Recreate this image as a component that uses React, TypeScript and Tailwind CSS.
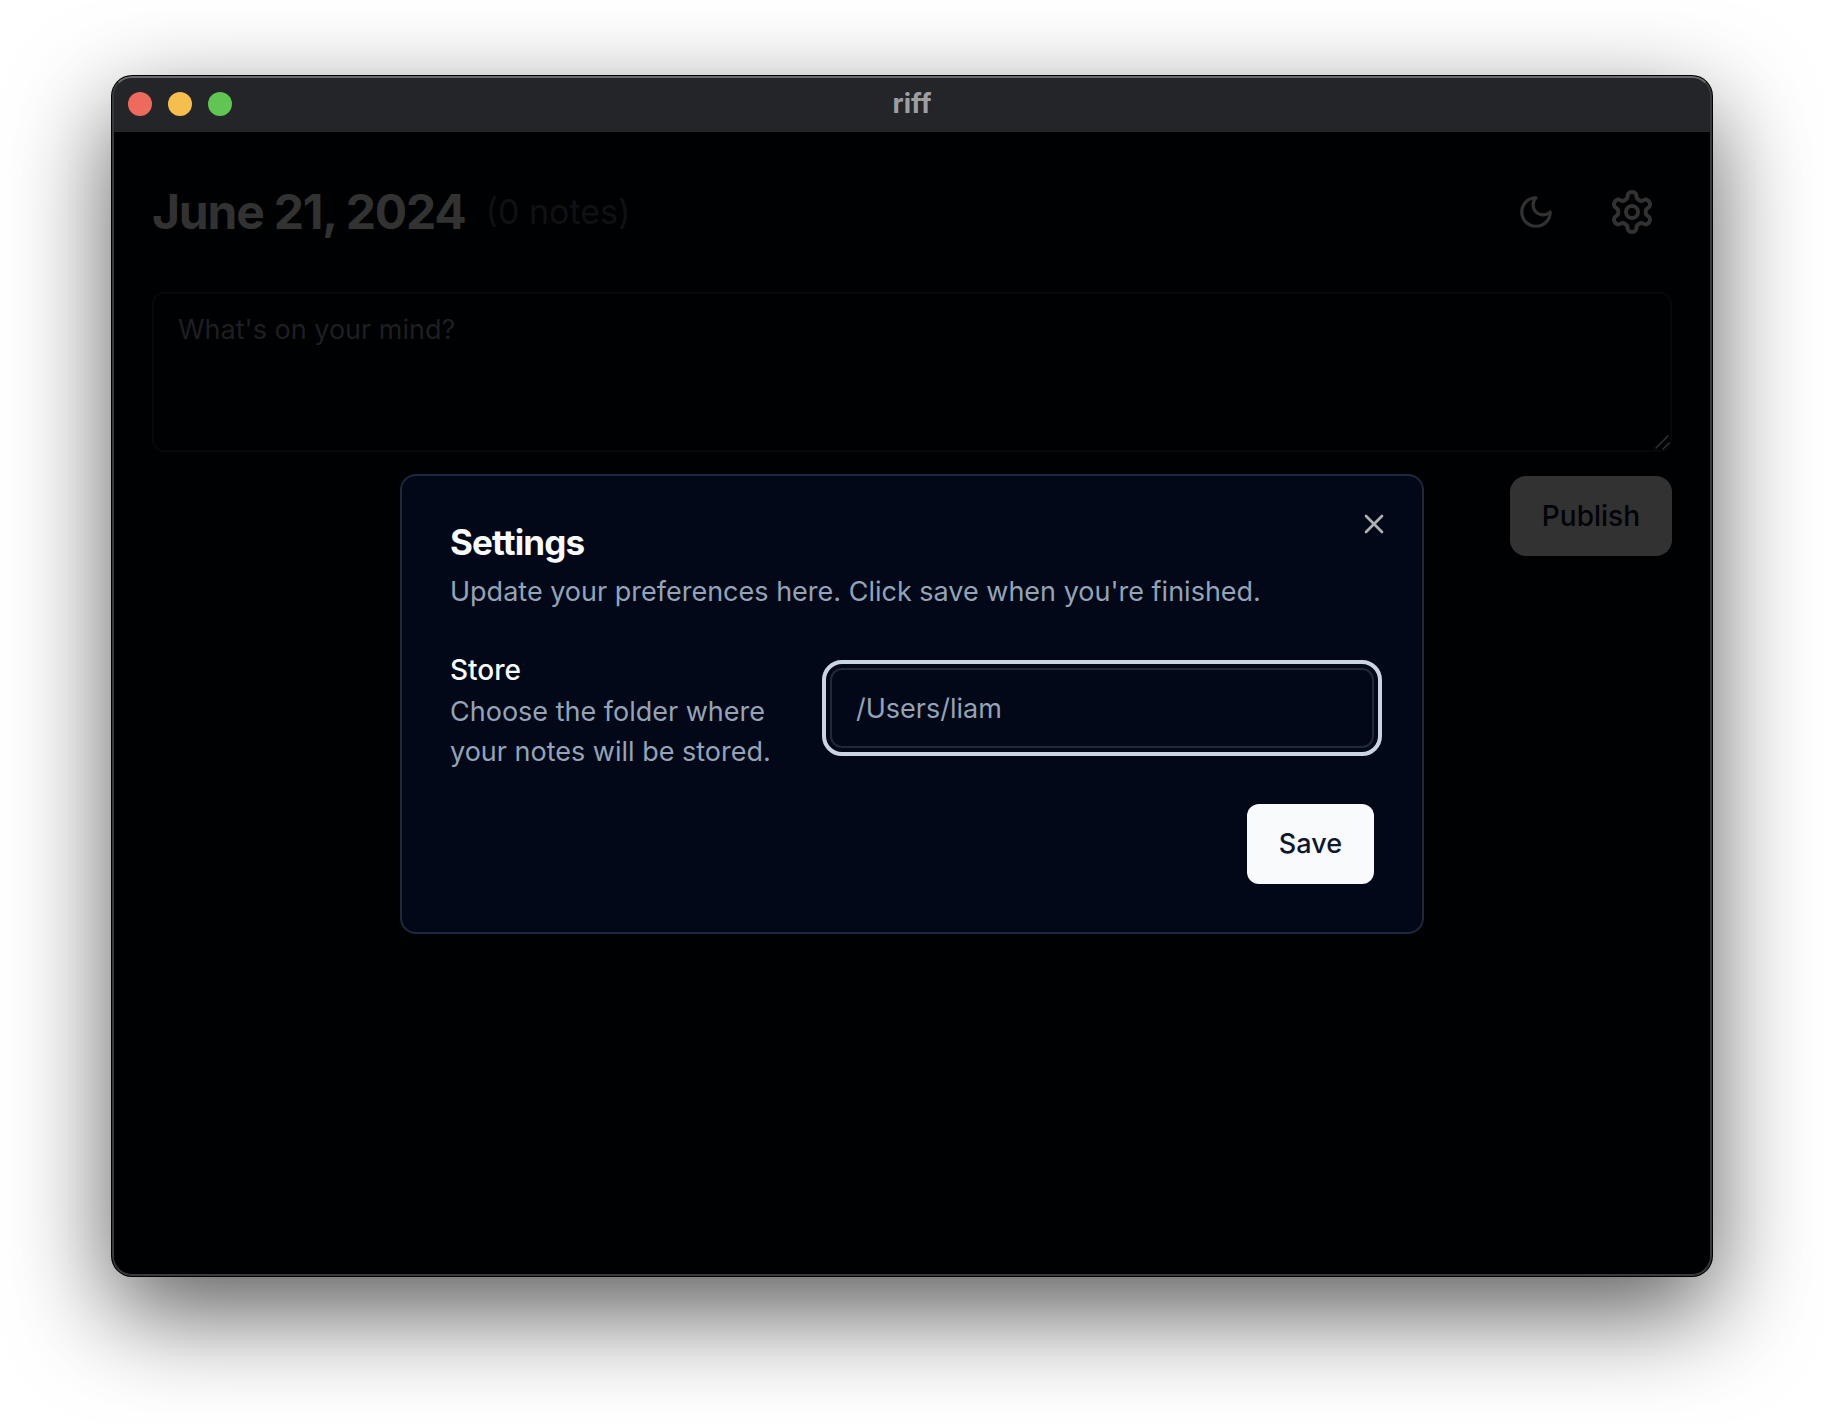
import { X } from "lucide-react";

function MoonIcon() {
  return (
    <svg className="size-[38px]" viewBox="0 0 24 24" fill="none" stroke="currentColor" strokeWidth="2" strokeLinecap="round" strokeLinejoin="round" aria-hidden="true">
      <path d="M12 3a6 6 0 0 0 9 9 9 9 0 1 1-9-9Z" />
    </svg>
  );
}

function GearIcon() {
  return (
    <svg className="size-12" viewBox="0 0 24 24" fill="none" stroke="currentColor" strokeWidth="2" strokeLinecap="round" strokeLinejoin="round" aria-hidden="true">
      <path d="M12.22 2h-.44a2 2 0 0 0-2 2v.18a2 2 0 0 1-1 1.73l-.43.25a2 2 0 0 1-2 0l-.15-.08a2 2 0 0 0-2.73.73l-.22.38a2 2 0 0 0 .73 2.73l.15.1a2 2 0 0 1 1 1.72v.51a2 2 0 0 1-1 1.74l-.15.09a2 2 0 0 0-.73 2.73l.22.38a2 2 0 0 0 2.73.73l.15-.08a2 2 0 0 1 2 0l.43.25a2 2 0 0 1 1 1.73V20a2 2 0 0 0 2 2h.44a2 2 0 0 0 2-2v-.18a2 2 0 0 1 1-1.73l.43-.25a2 2 0 0 1 2 0l.15.08a2 2 0 0 0 2.73-.73l.22-.39a2 2 0 0 0-.73-2.73l-.15-.08a2 2 0 0 1-1-1.74v-.5a2 2 0 0 1 1-1.74l.15-.09a2 2 0 0 0 .73-2.73l-.22-.38a2 2 0 0 0-2.73-.73l-.15.08a2 2 0 0 1-2 0l-.43-.25a2 2 0 0 1-1-1.73V4a2 2 0 0 0-2-2z" />
      <circle cx="12" cy="12" r="3" />
    </svg>
  );
}

function TitleBar() {
  return (
    <div className="relative flex h-14 items-center bg-[#242529] px-4">
      <div className="flex gap-4">
        <button aria-label="Close window" className="size-6 rounded-full bg-[#ed6a5e]" />
        <button aria-label="Minimise window" className="size-6 rounded-full bg-[#f5bf4f]" />
        <button aria-label="Zoom window" className="size-6 rounded-full bg-[#61c554]" />
      </div>
      <span className="pointer-events-none absolute inset-x-0 text-center text-[27px] leading-8 font-bold text-[#9d9ea2]">riff</span>
    </div>
  );
}

function Journal() {
  return (
    <main className="px-10 pt-10">
      <header className="flex h-20 items-center justify-between">
        <div className="flex items-center gap-5">
          <h1 className="text-[48px] leading-[64px] font-bold tracking-tight text-[#323232]">June 21, 2024</h1>
          <span className="text-[34px] leading-[56px] text-[#101114]">(0 notes)</span>
        </div>
        <div className="flex items-center gap-4 text-[#323232]">
          <button aria-label="Toggle theme" className="flex size-20 items-center justify-center">
            <MoonIcon />
          </button>
          <button aria-label="Open settings" className="flex size-20 items-center justify-center">
            <GearIcon />
          </button>
        </div>
      </header>
      <div className="relative mt-10">
        <textarea
          aria-label="New note"
          placeholder="What's on your mind?"
          className="block h-40 w-full resize-none rounded-xl border-2 border-[#070809] bg-transparent px-6 py-4 text-[27px] leading-10 text-[#323232] placeholder:text-[#1e1f22]"
        />
        <svg className="absolute right-0.5 bottom-0.5 size-4" viewBox="0 0 16 16" stroke="#323232" strokeWidth="1.5" strokeLinecap="round" aria-hidden="true">
          <path d="M2 14 14 2M9 15l6-6" />
        </svg>
      </div>
      <div className="mt-6 flex justify-end">
        <button className="h-20 rounded-2xl bg-[#323232] px-8 text-[28px] leading-10 font-medium text-[#020308]">Publish</button>
      </div>
    </main>
  );
}

function SettingsDialog() {
  return (
    <section
      role="dialog"
      aria-labelledby="settings-title"
      className="relative w-full max-w-[1024px] rounded-2xl border-2 border-[#1e293b] bg-[#020817] p-12"
    >
      <button aria-label="Close" className="absolute top-8 right-8 flex size-8 items-center justify-center text-[#b0b1b4]">
        <X size={32} strokeWidth={2} />
      </button>
      <h2 id="settings-title" className="text-[35px] leading-9 font-bold tracking-tight text-[#f8fafc]">Settings</h2>
      <p className="mt-3 text-[27px] leading-10 text-[#94a3b8]">Update your preferences here. Click save when you're finished.</p>
      <form className="mt-8">
        <div className="flex items-center gap-8">
          <div className="w-[348px] shrink-0 pt-2">
            <label htmlFor="store" className="mb-1 block text-[28px] leading-9 font-medium text-[#f8fafc]">Store</label>
            <p id="store-help" className="text-[27px] leading-10 text-[#94a3b8]">Choose the folder where your notes will be stored.</p>
          </div>
          <input
            id="store"
            aria-describedby="store-help"
            placeholder="/Users/liam"
            className="h-20 min-w-0 flex-1 rounded-xl border-2 border-[#1e293b] bg-transparent px-6 text-[27px] leading-10 text-[#f8fafc] outline-4 outline-offset-4 outline-[#cbd5e1] placeholder:text-[#94a3b8]"
          />
        </div>
        <div className="mt-8 flex justify-end">
          <button type="button" className="h-20 rounded-xl bg-[#f8fafc] px-8 text-[27px] leading-10 font-medium text-[#0f172a]">Save</button>
        </div>
      </form>
    </section>
  );
}

export default function App() {
  return (
    <div className="flex min-h-screen flex-col bg-white px-28 pt-[76px] pb-[148px] font-['Inter',sans-serif]">
      <div className="relative flex flex-1 flex-col overflow-hidden rounded-[20px] bg-[#000103] shadow-[0_0_0_1px_#000,0_36px_100px_rgba(0,0,0,0.65)]">
        <TitleBar />
        <Journal />
        <div className="absolute inset-x-0 top-14 bottom-0 flex items-center justify-center">
          <SettingsDialog />
        </div>
        <div className="pointer-events-none absolute inset-0 rounded-[20px] border-2 border-[#38393c] border-t-[#696b6e]" />
      </div>
    </div>
  );
}
